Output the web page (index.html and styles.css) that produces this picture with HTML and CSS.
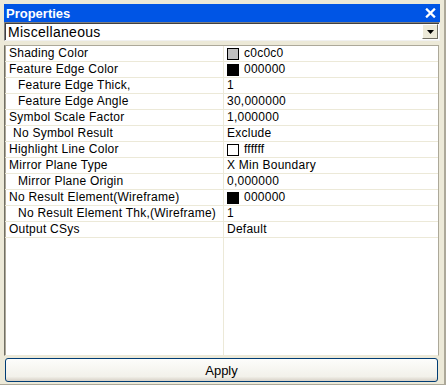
FILE: index.html
```html
<!DOCTYPE html>
<html>
<head>
<meta charset="utf-8">
<link rel="stylesheet" href="styles.css">
</head>
<body>
<div class="window">
  <div class="titlebar">
    <span class="title">Properties</span>
    <svg class="close" width="10" height="9" viewBox="0 0 10 9"><path d="M1 0.5 L9 8.5 M9 0.5 L1 8.5" stroke="#fff" stroke-width="2"/></svg>
  </div>
  <div class="combo">
    <span class="combo-text">Miscellaneous</span>
    <span class="combo-btn"><svg width="7" height="4" viewBox="0 0 7 4"><path d="M0 0 H7 L3.5 4 Z" fill="#000"/></svg></span>
  </div>
  <div class="grid">
    <div class="rows">
      <div class="row"><div class="name">Shading Color</div><div class="val"><span class="sw" style="background:#c0c0c0"></span>c0c0c0</div></div>
      <div class="row"><div class="name">Feature Edge Color</div><div class="val"><span class="sw" style="background:#000"></span>000000</div></div>
      <div class="row"><div class="name ind">Feature Edge Thick,</div><div class="val">1</div></div>
      <div class="row"><div class="name ind">Feature Edge Angle</div><div class="val">30,000000</div></div>
      <div class="row"><div class="name">Symbol Scale Factor</div><div class="val">1,000000</div></div>
      <div class="row"><div class="name ind1">No Symbol Result</div><div class="val">Exclude</div></div>
      <div class="row"><div class="name">Highlight Line Color</div><div class="val"><span class="sw" style="background:#fff"></span>ffffff</div></div>
      <div class="row"><div class="name">Mirror Plane Type</div><div class="val">X Min Boundary</div></div>
      <div class="row"><div class="name ind">Mirror Plane Origin</div><div class="val">0,000000</div></div>
      <div class="row"><div class="name">No Result Element(Wireframe)</div><div class="val"><span class="sw" style="background:#000"></span>000000</div></div>
      <div class="row"><div class="name ind">No Result Element Thk,(Wireframe)</div><div class="val">1</div></div>
      <div class="row"><div class="name">Output CSys</div><div class="val">Default</div></div>
      <div class="row filler"><div class="name"></div><div class="val"></div></div>
    </div>
  </div>
  <button class="apply">Apply</button>
</div>
</body>
</html>
```
FILE: styles.css
```css
html, body {
  margin: 0;
  padding: 0;
  width: 446px;
  height: 385px;
  overflow: hidden;
  background: #ece9d8;
  font-family: "Liberation Sans", Arial, sans-serif;
  font-size: 12px;
  color: #000;
}
.window {
  box-sizing: border-box;
  width: 446px;
  height: 385px;
  padding: 4px 4px 2px 4px;
  display: flex;
  flex-direction: column;
  border-right: 2px solid #aca899;
  border-bottom: 1px solid #aca899;
}
.titlebar {
  height: 18px;
  background: #0055e5;
  display: flex;
  align-items: center;
  justify-content: space-between;
  padding: 0 4px 0 2px;
  flex: none;
}
.title {
  color: #fff;
  font-weight: bold;
  font-size: 13px;
}
.close { display: block; width: 11px; height: 10px; }
.combo {
  height: 19px;
  box-sizing: border-box;
  background: #fff;
  border: 1px solid;
  border-color: #808080 #f0f0f0 #f0f0f0 #808080;
  box-shadow: inset 1px 1px 0 #404040;
  display: flex;
  align-items: center;
  justify-content: space-between;
  flex: none;
}
.combo-text {
  padding-left: 3px;
  font-size: 14px;
  letter-spacing: 0.3px;
}
.combo-btn {
  width: 16px;
  height: 15px;
  box-sizing: border-box;
  margin-right: 1px;
  background: #ece9d8;
  border: 1px solid;
  border-color: #fff #716f64 #716f64 #fff;
  display: flex;
  align-items: center;
  justify-content: center;
}
.grid {
  margin-top: 4px;
  flex: 1;
  background: #fff;
  border-top: 1px solid #aca899;
  border-left: 1px solid #716f64;
  border-right: 1px solid #aca899;
  border-bottom: 1px solid #ece9d8;
  box-shadow: inset 1px 0 0 #aca899;
  margin-right: 1px;
  display: flex;
  flex-direction: column;
  overflow: hidden;
}
.rows {
  flex: 1;
  display: flex;
  flex-direction: column;
}
.row {
  display: grid;
  grid-template-columns: 219px 1fr;
  border-bottom: 1px solid #ece9d8;
  box-sizing: border-box;
  height: 16px;
  line-height: 15px;
  letter-spacing: 0.25px;
}
.row.filler {
  flex: 1;
  border-bottom: none;
}
.name {
  padding-left: 3px;
  border-right: 1px solid #ece9d8;
  white-space: nowrap;
  overflow: hidden;
  margin-left: 1px;
}
.name.ind { padding-left: 12px; }
.name.ind1 { padding-left: 7px; }
.val {
  padding-left: 3px;
  display: flex;
  align-items: center;
  white-space: nowrap;
}
.sw {
  display: inline-block;
  width: 12px;
  height: 12px;
  box-sizing: border-box;
  border: 1px solid #000;
  margin-right: 5px;
}
.apply {
  flex: none;
  margin: 2px 2px 0 1px;
  height: 24px;
  font-family: "Liberation Sans", Arial, sans-serif;
  font-size: 13px;
  color: #000;
  border: 1px solid #003c74;
  border-radius: 3px;
  background: linear-gradient(#fdfdfb, #f2f1ea 80%, #d6d0c5);
  padding: 0;
}
```
